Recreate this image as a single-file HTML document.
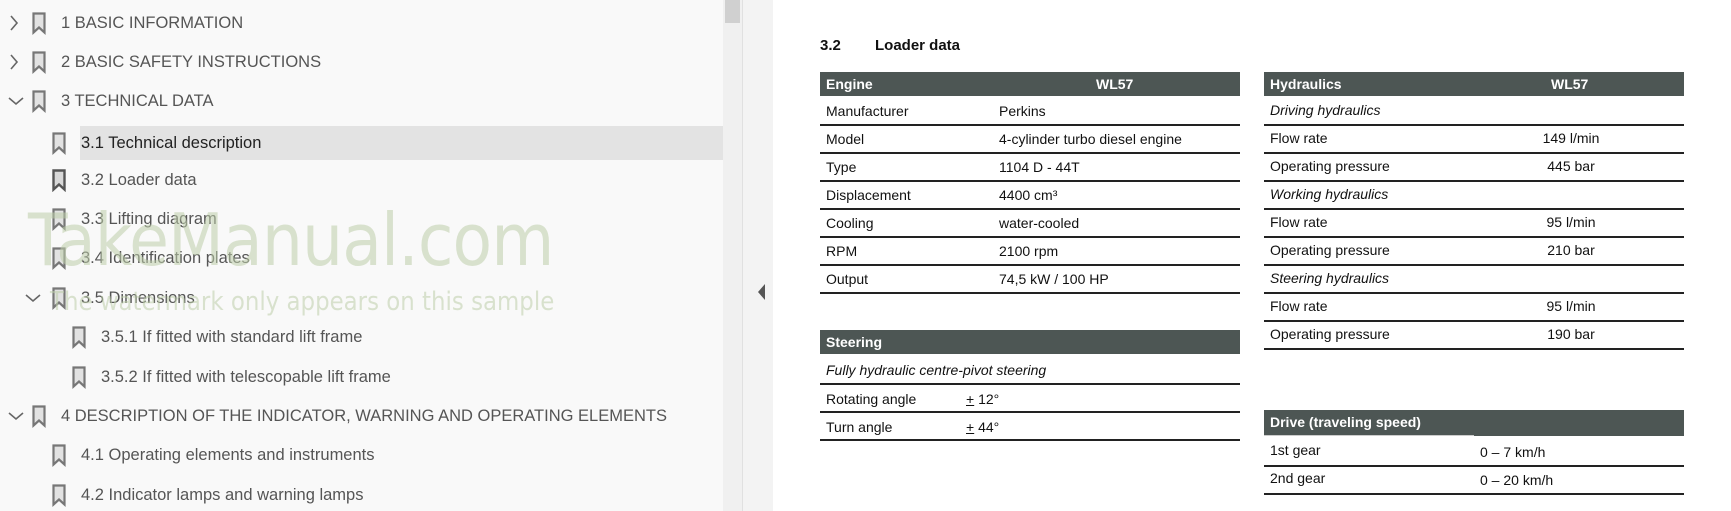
<!DOCTYPE html><html><head><meta charset="utf-8"><style>
body{margin:0;width:1731px;height:511px;overflow:hidden;background:#fff;font-family:"Liberation Sans",Arial,sans-serif;position:relative}
#left{position:absolute;left:0;top:0;width:723px;height:511px;background:#f9f9f9;overflow:hidden}
.it{position:absolute;height:34px;line-height:34px;font-size:16.5px;color:#555;white-space:nowrap}
.it svg.bm{position:absolute;top:6px;left:-29px}
.ch{position:absolute}
#sb{position:absolute;left:723px;top:0;width:19px;height:511px;background:#f0f0f0}
#thumb{position:absolute;left:725px;top:0;width:15px;height:23px;background:#d0d0d0}
#div{position:absolute;left:742px;top:0;width:31px;height:511px;background:#f3f3f3;border-left:1px solid #e0e0e0}
.wm{position:absolute;color:rgba(190,205,170,.55);white-space:nowrap;font-family:"DejaVu Sans",sans-serif;transform-origin:0 0}
#page{position:absolute;left:773px;top:0;width:958px;height:511px;background:#fff}
.t{position:absolute;font-size:14px;color:#111;white-space:nowrap}
.hdr{position:absolute;height:24px;background:#4d5654;color:#fff;font-weight:bold;font-size:14px;line-height:24px}
.ln{position:absolute;height:1.5px;background:#222}
i{font-style:italic}
</style></head><body>
<div id="left">
<svg width="0" height="0" style="position:absolute"><defs><g id="b"><path d="M1.5 1.5h11v19l-5.5-5-5.5 5z" fill="#e2e2e2" stroke="#777" stroke-width="2.2"/></g><g id="r"><path d="M2 1l6 7-6 7" fill="none" stroke="#666" stroke-width="1.6"/></g><g id="d"><path d="M1 2l7 6 7-6" fill="none" stroke="#666" stroke-width="1.6"/></g></defs></svg>
<div style="position:absolute;left:80px;top:126px;width:643px;height:34px;background:#e3e3e3"></div>

<div class="it" style="left:61px;top:6px"><svg class="ch" style="left:-52px;top:9px" width="12" height="16"><use href="#r"/></svg><svg class="bm" width="15" height="23"><use href="#b"/></svg>1 BASIC INFORMATION</div>
<div class="it" style="left:61px;top:45px"><svg class="ch" style="left:-52px;top:9px" width="12" height="16"><use href="#r"/></svg><svg class="bm" width="15" height="23"><use href="#b"/></svg>2 BASIC SAFETY INSTRUCTIONS</div>
<div class="it" style="left:61px;top:84px"><svg class="ch" style="left:-53px;top:12px" width="16" height="10"><use href="#d"/></svg><svg class="bm" width="15" height="23"><use href="#b"/></svg>3 TECHNICAL DATA</div>
<div class="it" style="left:81px;top:126px;color:#222"><svg class="bm" width="15" height="23"><use href="#b"/></svg>3.1 Technical description</div>
<div class="it" style="left:81px;top:163px"><svg class="bm" width="15" height="23"><path d="M1.5 1.5h11v19l-5.5-5-5.5 5z" fill="#d8d8d8" stroke="#555" stroke-width="2.4"/></svg>3.2 Loader data</div>
<div class="it" style="left:81px;top:202px"><svg class="bm" width="15" height="23"><use href="#b"/></svg>3.3 Lifting diagram</div>
<div class="it" style="left:81px;top:241px"><svg class="bm" width="15" height="23"><use href="#b"/></svg>3.4 Identification plates</div>
<div class="it" style="left:81px;top:281px"><svg class="ch" style="left:-56px;top:12px" width="16" height="10"><use href="#d"/></svg><svg class="bm" width="15" height="23"><use href="#b"/></svg>3.5 Dimensions</div>
<div class="it" style="left:101px;top:320px"><svg class="bm" width="15" height="23"><use href="#b"/></svg>3.5.1 If fitted with standard lift frame</div>
<div class="it" style="left:101px;top:360px"><svg class="bm" width="15" height="23"><use href="#b"/></svg>3.5.2 If fitted with telescopable lift frame</div>
<div class="it" style="left:61px;top:399px"><svg class="ch" style="left:-53px;top:12px" width="16" height="10"><use href="#d"/></svg><svg class="bm" width="15" height="23"><use href="#b"/></svg>4 DESCRIPTION OF THE INDICATOR, WARNING AND OPERATING ELEMENTS</div>
<div class="it" style="left:81px;top:438px"><svg class="bm" width="15" height="23"><use href="#b"/></svg>4.1 Operating elements and instruments</div>
<div class="it" style="left:81px;top:478px"><svg class="bm" width="15" height="23"><use href="#b"/></svg>4.2 Indicator lamps and warning lamps</div>

<div class="wm" style="left:28px;top:198px;font-size:72px;letter-spacing:-1px;transform:scaleX(0.9)">TakeManual.com</div>
<div class="wm" style="left:50px;top:287px;font-size:26px;transform:scaleX(0.88)">The watermark only appears on this sample</div>
</div>
<div id="sb"></div><div id="thumb"></div>
<div id="div"><svg style="position:absolute;left:15px;top:284px" width="8" height="16"><path d="M7 0v16L0 8z" fill="#555"/></svg></div>

<div id="page">
<div class="t" style="left:47px;top:37px;font-weight:bold;font-size:15px">3.2</div>
<div class="t" style="left:102px;top:37px;font-weight:bold;font-size:15px">Loader data</div>

<div class="hdr" style="left:47px;top:72px;width:420px"><span style="position:absolute;left:6px">Engine</span><span style="position:absolute;left:276px">WL57</span></div>
<div class="t" style="left:53px;top:103px">Manufacturer</div><div class="t" style="left:226px;top:103px">Perkins</div>
<div class="ln" style="left:47px;top:124px;width:420px"></div>
<div class="t" style="left:53px;top:131px">Model</div><div class="t" style="left:226px;top:131px">4-cylinder turbo diesel engine</div>
<div class="ln" style="left:47px;top:152px;width:420px"></div>
<div class="t" style="left:53px;top:159px">Type</div><div class="t" style="left:226px;top:159px">1104 D - 44T</div>
<div class="ln" style="left:47px;top:180px;width:420px"></div>
<div class="t" style="left:53px;top:187px">Displacement</div><div class="t" style="left:226px;top:187px">4400 cm³</div>
<div class="ln" style="left:47px;top:208px;width:420px"></div>
<div class="t" style="left:53px;top:215px">Cooling</div><div class="t" style="left:226px;top:215px">water-cooled</div>
<div class="ln" style="left:47px;top:236px;width:420px"></div>
<div class="t" style="left:53px;top:243px">RPM</div><div class="t" style="left:226px;top:243px">2100 rpm</div>
<div class="ln" style="left:47px;top:264px;width:420px"></div>
<div class="t" style="left:53px;top:271px">Output</div><div class="t" style="left:226px;top:271px">74,5 kW / 100 HP</div>
<div class="ln" style="left:47px;top:292px;width:420px"></div>

<div class="hdr" style="left:47px;top:330px;width:420px"><span style="position:absolute;left:6px">Steering</span></div>
<div class="t" style="left:53px;top:362px"><i>Fully hydraulic centre-pivot steering</i></div>
<div class="ln" style="left:47px;top:383px;width:420px"></div>
<div class="t" style="left:53px;top:391px">Rotating angle</div><div class="t" style="left:193px;top:391px"><u>+</u> 12°</div>
<div class="ln" style="left:47px;top:411px;width:420px"></div>
<div class="t" style="left:53px;top:419px">Turn angle</div><div class="t" style="left:193px;top:419px"><u>+</u> 44°</div>
<div class="ln" style="left:47px;top:439px;width:420px"></div>

<div class="hdr" style="left:491px;top:72px;width:420px"><span style="position:absolute;left:6px">Hydraulics</span><span style="position:absolute;left:287px">WL57</span></div>
<div class="t" style="left:497px;top:102px"><i>Driving hydraulics</i></div>
<div class="ln" style="left:491px;top:124px;width:420px"></div>
<div class="t" style="left:497px;top:130px">Flow rate</div><div class="t" style="left:752px;top:130px;width:92px;text-align:center">149 l/min</div>
<div class="ln" style="left:491px;top:152px;width:420px"></div>
<div class="t" style="left:497px;top:158px">Operating pressure</div><div class="t" style="left:752px;top:158px;width:92px;text-align:center">445 bar</div>
<div class="ln" style="left:491px;top:180px;width:420px"></div>
<div class="t" style="left:497px;top:186px"><i>Working hydraulics</i></div>
<div class="ln" style="left:491px;top:208px;width:420px"></div>
<div class="t" style="left:497px;top:214px">Flow rate</div><div class="t" style="left:752px;top:214px;width:92px;text-align:center">95 l/min</div>
<div class="ln" style="left:491px;top:236px;width:420px"></div>
<div class="t" style="left:497px;top:242px">Operating pressure</div><div class="t" style="left:752px;top:242px;width:92px;text-align:center">210 bar</div>
<div class="ln" style="left:491px;top:264px;width:420px"></div>
<div class="t" style="left:497px;top:270px"><i>Steering hydraulics</i></div>
<div class="ln" style="left:491px;top:292px;width:420px"></div>
<div class="t" style="left:497px;top:298px">Flow rate</div><div class="t" style="left:752px;top:298px;width:92px;text-align:center">95 l/min</div>
<div class="ln" style="left:491px;top:320px;width:420px"></div>
<div class="t" style="left:497px;top:326px">Operating pressure</div><div class="t" style="left:752px;top:326px;width:92px;text-align:center">190 bar</div>
<div class="ln" style="left:491px;top:348px;width:420px"></div>

<div class="hdr" style="left:491px;top:410px;width:420px;height:26px"><span style="position:absolute;left:6px">Drive (traveling speed)</span></div>
<div style="position:absolute;left:491px;top:435px;width:210px;height:1px;background:#ccc"></div>
<div class="t" style="left:497px;top:442px">1st gear</div><div class="t" style="left:707px;top:444px">0 – 7 km/h</div>
<div class="ln" style="left:491px;top:465px;width:420px"></div>
<div class="t" style="left:497px;top:470px">2nd gear</div><div class="t" style="left:707px;top:472px">0 – 20 km/h</div>
<div class="ln" style="left:491px;top:493px;width:420px"></div>
</div>
</body></html>
